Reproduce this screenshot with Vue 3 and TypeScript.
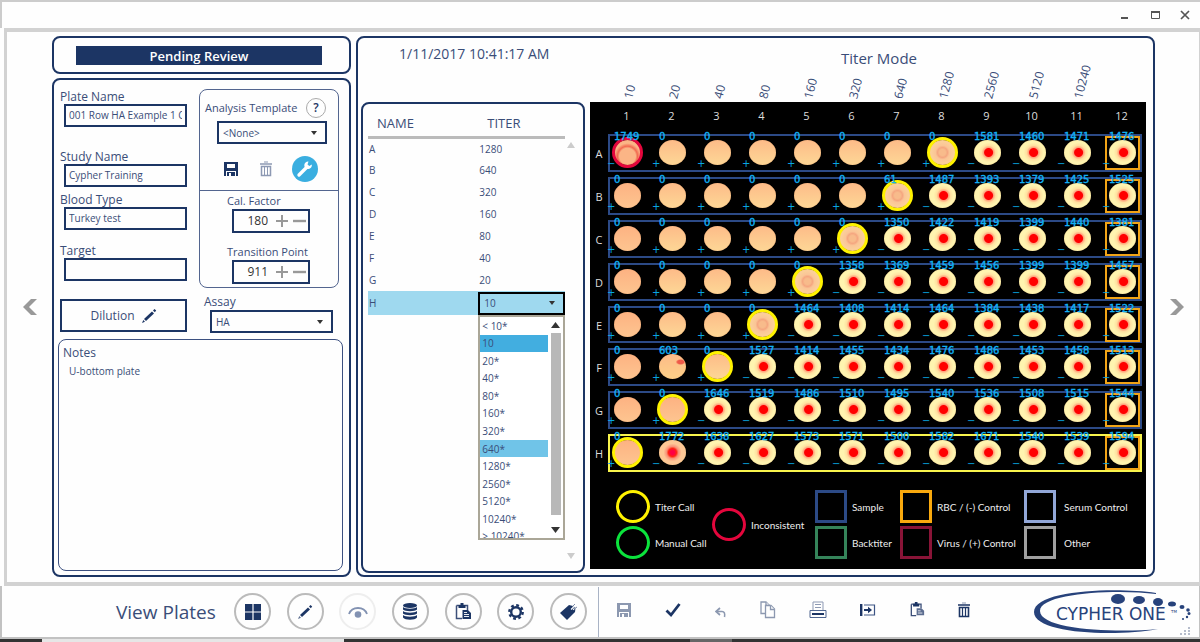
<script setup lang="ts">
import { ref } from 'vue'

interface PlateRow {
  name: string
  titer: string
  call: number
  values: number[]
}

const rows: PlateRow[] = [
  { name: 'A', titer: '1280', call: 8, values: [1749, 0, 0, 0, 0, 0, 0, 0, 1581, 1460, 1471, 1476] },
  { name: 'B', titer: '640', call: 7, values: [0, 0, 0, 0, 0, 0, 61, 1487, 1393, 1379, 1425, 1525] },
  { name: 'C', titer: '320', call: 6, values: [0, 0, 0, 0, 0, 0, 1350, 1422, 1419, 1399, 1440, 1381] },
  { name: 'D', titer: '160', call: 5, values: [0, 0, 0, 0, 0, 1358, 1369, 1459, 1456, 1399, 1399, 1457] },
  { name: 'E', titer: '80', call: 4, values: [0, 0, 0, 0, 1464, 1408, 1414, 1464, 1384, 1438, 1417, 1522] },
  { name: 'F', titer: '40', call: 3, values: [0, 603, 0, 1527, 1414, 1455, 1434, 1476, 1486, 1453, 1458, 1513] },
  { name: 'G', titer: '20', call: 2, values: [0, 0, 1646, 1519, 1486, 1510, 1495, 1540, 1536, 1508, 1515, 1544] },
  { name: 'H', titer: '10', call: 1, values: [0, 1772, 1638, 1627, 1573, 1571, 1500, 1582, 1671, 1540, 1539, 1594] },
]

const dilutions = ['10', '20', '40', '80', '160', '320', '640', '1280', '2560', '5120', '10240', '']
const titerOptions = ['< 10*', '10', '20*', '40*', '80*', '160*', '320*', '640*', '1280*', '2560*', '5120*', '10240*', '> 10240*']
const hovered = '640*'

const plateName = ref('001 Row HA Example 1 Copy')
const studyName = ref('Cypher Training')
const bloodType = ref('Turkey test')
const target = ref('')
const notes = ref('U-bottom plate')
const template = ref('<None>')
const assay = ref('HA')
const calFactor = ref(180)
const transition = ref(911)
const titerH = ref('10')

function isPositive(row: PlateRow, i: number): boolean {
  return i < row.call && !isInconsistent(row, i)
}

function isInconsistent(row: PlateRow, i: number): boolean {
  return row.name === 'A' && i === 0
}

function wellClass(row: PlateRow, i: number) {
  return {
    negative: i >= row.call,
    called: i === row.call - 1,
    inconsistent: isInconsistent(row, i),
    warm: i < row.call && (row.name === 'H' || row.name === 'G' || i === 0),
    smear: row.name === 'F' && i === 1,
    diffuse: row.name === 'H' && i === 1,
    ringed: i === row.call - 1 && row.call > 3,
  }
}
</script>

<template>
  <div class="window">
    <header class="titlebar">
      <button class="win-btn" aria-label="Minimize">
        <svg width="12" height="12" viewBox="0 0 12 12"><path d="M2 9H9" stroke="#555" stroke-width="2" /></svg>
      </button>
      <button class="win-btn" aria-label="Maximize">
        <svg width="12" height="12" viewBox="0 0 12 12"><path d="M2.500 3H10.500V9.500H2.500Z" fill="none" stroke="#555" /><path d="M2 3H11" stroke="#555" stroke-width="2" /></svg>
      </button>
      <button class="win-btn" aria-label="Close">
        <svg width="12" height="12" viewBox="0 0 12 12"><path d="M2 2L10 10M10 2L2 10" stroke="#555" stroke-width="1.700" /></svg>
      </button>
    </header>

    <main class="frame">
      <button class="pager" aria-label="Previous plate">
        <svg width="14" height="16" viewBox="0 0 14 16"><path d="M8 0H14L6 8L14 16H8L0 8Z" fill="#999" /></svg>
      </button>

      <section class="details">
        <div class="box status"><h1>Pending Review</h1></div>

        <div class="box form">
          <div class="form-cols">
            <div class="col-left">
              <div class="field first">
                <label for="plate">Plate Name</label>
                <input id="plate" v-model="plateName" type="text" />
              </div>
              <div class="field study">
                <label for="study">Study Name</label>
                <input id="study" v-model="studyName" type="text" />
              </div>
              <div class="field blood">
                <label for="blood">Blood Type</label>
                <input id="blood" v-model="bloodType" type="text" />
              </div>
              <div class="field">
                <label for="target">Target</label>
                <input id="target" v-model="target" type="text" />
              </div>
              <button class="dilution">
                Dilution
                <svg width="16" height="16" viewBox="0 0 16 16" fill="#1c3564"><path d="M3 11L11 3.500L13 5.500L5 13Z" /><path d="M12 2.500L13.500 1L15.200 2.600L13.800 4.300Z" /><path d="M2.300 12L4 13.700L1 15Z" /></svg>
              </button>
            </div>

            <div class="col-right">
              <div class="template-box">
                <div class="template-top">
                  <div class="template-label">
                    <label for="template">Analysis Template</label>
                    <button class="help" aria-label="Help">?</button>
                  </div>
                  <div class="select-wrap template-select">
                    <select id="template" v-model="template"><option>&lt;None&gt;</option></select>
                    <svg class="caret" width="6" height="4" viewBox="0 0 6 4"><path d="M0 0H6L3 4Z" fill="#333" /></svg>
                  </div>
                  <div class="template-actions">
                    <button aria-label="Save template">
                      <svg width="16" height="16" viewBox="0 0 16 16"><path d="M1 1H15V15H13V10H3V15H1ZM4 3V7H12V3ZM4 11H12V15H8V12H6V15H4Z" fill="#1c3564" fill-rule="evenodd" /></svg>
                    </button>
                    <button aria-label="Delete template">
                      <svg width="12" height="16" viewBox="0 0 12 16" fill="none" stroke="#8d99b3"><path d="M4 1H8" /><path d="M0 3H12M1.500 5.500V14.500H10.500V5.500Z" stroke-width="1.500" /><path d="M4.500 6V14M7.500 6V14" /></svg>
                    </button>
                    <button class="wrench" aria-label="Configure">
                      <svg width="18" height="18" viewBox="0 0 18 18"><path d="M3 15L11 7" stroke="#fff" stroke-width="3.400" stroke-linecap="round" /><path d="M15.800 4.500A3.800 3.800 0 1 1 12.500 1.500L11.500 4.500L13.300 6Z" fill="#fff" /></svg>
                    </button>
                  </div>
                </div>
                <div class="template-bottom">
                  <div class="field">
                    <label for="cal">Cal. Factor</label>
                    <div class="stepper">
                      <input id="cal" v-model.number="calFactor" type="text" />
                      <button aria-label="Increase calibration factor" @click="calFactor++"><svg width="12" height="12" viewBox="0 0 12 12"><path d="M6 0V12M0 6H12" stroke="#999" stroke-width="2" /></svg></button>
                      <button aria-label="Decrease calibration factor" @click="calFactor--"><svg width="13" height="12" viewBox="0 0 13 12"><path d="M0 6H13" stroke="#999" stroke-width="2.400" /></svg></button>
                    </div>
                  </div>
                  <div class="field">
                    <label for="trans">Transition Point</label>
                    <div class="stepper">
                      <input id="trans" v-model.number="transition" type="text" />
                      <button aria-label="Increase transition point" @click="transition++"><svg width="12" height="12" viewBox="0 0 12 12"><path d="M6 0V12M0 6H12" stroke="#999" stroke-width="2" /></svg></button>
                      <button aria-label="Decrease transition point" @click="transition--"><svg width="13" height="12" viewBox="0 0 13 12"><path d="M0 6H13" stroke="#999" stroke-width="2.400" /></svg></button>
                    </div>
                  </div>
                </div>
              </div>
              <div class="field assay">
                <label for="assay">Assay</label>
                <div class="select-wrap">
                  <select id="assay" v-model="assay"><option>HA</option></select>
                  <svg class="caret" width="6" height="4" viewBox="0 0 6 4"><path d="M0 0H6L3 4Z" fill="#333" /></svg>
                </div>
              </div>
            </div>
          </div>

          <div class="notes">
            <label for="notes">Notes</label>
            <textarea id="notes" v-model="notes"></textarea>
          </div>
        </div>
      </section>

      <section class="box plate">
        <div class="titer-col">
          <time class="stamp">1/11/2017 10:41:17 AM</time>
          <div class="box titer-box">
            <table>
              <thead>
                <tr><th>NAME</th><th>TITER</th></tr>
              </thead>
              <tbody>
                <tr v-for="row in rows" :key="row.name" :class="{ selected: row.name === 'H' }">
                  <td>{{ row.name }}</td>
                  <td v-if="row.name !== 'H'">{{ row.titer }}</td>
                  <td v-else>
                    <div class="titer-picker">
                      <div class="select-wrap">
                        <select v-model="titerH" aria-label="Titer for row H"><option>10</option></select>
                        <svg class="caret" width="6" height="4" viewBox="0 0 6 4"><path d="M0 0H6L3 4Z" fill="#333" /></svg>
                      </div>
                      <div class="menu">
                        <ul role="listbox" aria-label="Titer values">
                          <li v-for="o in titerOptions" :key="o" role="option" :aria-selected="o === titerH" :class="{ current: o === titerH, hover: o === hovered }">{{ o }}</li>
                        </ul>
                        <div class="scroll">
                          <svg width="9" height="6" viewBox="0 0 9 6"><path d="M0 6L4.500 0L9 6Z" fill="#333" /></svg>
                          <span class="thumb"></span>
                          <svg width="9" height="6" viewBox="0 0 9 6"><path d="M0 0L4.500 6L9 0Z" fill="#333" /></svg>
                        </div>
                      </div>
                    </div>
                  </td>
                </tr>
              </tbody>
            </table>
            <div class="gutter">
              <svg width="8" height="6" viewBox="0 0 8 6"><path d="M0 6L4 0L8 6Z" fill="#ccc" /></svg>
              <svg width="8" height="6" viewBox="0 0 8 6"><path d="M0 0L4 6L8 0Z" fill="#ccc" /></svg>
            </div>
          </div>
        </div>

        <div class="board-col">
          <h2>Titer Mode</h2>
          <div class="cols dilution-labels">
            <span v-for="(d, i) in dilutions" :key="i">{{ d }}</span>
          </div>
          <div class="board">
            <div class="cols numbers"><span v-for="n in 12" :key="n">{{ n }}</span></div>
            <div class="rows">
              <div v-for="row in rows" :key="row.name" class="row">
                <span class="row-name">{{ row.name }}</span>
                <div class="sample" :class="{ active: row.name === 'H' }">
                  <div class="wells">
                    <div v-for="(v, i) in row.values" :key="i" class="cell">
                      <i v-if="i === 11" class="control"></i>
                      <i class="well" :class="wellClass(row, i)"></i>
                      <i v-if="i === row.call - 1" class="ring"></i>
                      <i v-if="isInconsistent(row, i)" class="ring bad"></i>
                      <span class="value">{{ v }}</span>
                      <span class="sign">{{ isPositive(row, i) ? '+' : '−' }}</span>
                    </div>
                  </div>
                </div>
              </div>
            </div>
            <div class="legend">
              <div class="group">
                <div class="item"><i class="circle yellow"></i>Titer Call</div>
                <div class="item"><i class="circle green"></i>Manual Call</div>
              </div>
              <div class="group">
                <div class="item"><i class="circle red"></i>Inconsistent</div>
              </div>
              <div class="group">
                <div class="item"><i class="square blue"></i>Sample</div>
                <div class="item"><i class="square back"></i>Backtiter</div>
              </div>
              <div class="group">
                <div class="item"><i class="square orange"></i>RBC / (-) Control</div>
                <div class="item"><i class="square virus"></i>Virus / (+) Control</div>
              </div>
              <div class="group wide">
                <div class="item"><i class="square serum"></i>Serum Control</div>
                <div class="item"><i class="square other"></i>Other</div>
              </div>
            </div>
          </div>
        </div>
      </section>

      <button class="pager" aria-label="Next plate">
        <svg width="14" height="16" viewBox="0 0 14 16"><path d="M6 0H0L8 8L0 16H6L14 8Z" fill="#999" /></svg>
      </button>
    </main>

    <footer class="toolbar">
      <span class="view-title">View Plates</span>
      <nav class="round-buttons" aria-label="Views">
        <button aria-label="Plates">
          <svg width="16" height="16" viewBox="0 0 16 16" fill="#1c3564"><path d="M0 0H7.400V7.400H0ZM8.600 0H16V7.400H8.600ZM0 8.600H7.400V16H0ZM8.600 8.600H16V16H8.600Z" /></svg>
        </button>
        <button aria-label="Edit">
          <svg width="16" height="16" viewBox="0 0 16 16" fill="#1c3564"><path d="M3 11L11 3.500L13 5.500L5 13Z" /><path d="M12 2.500L13.500 1L15.200 2.600L13.800 4.300Z" /><path d="M2.300 12L4 13.700L1 15Z" opacity=".7" /></svg>
        </button>
        <button class="off" aria-label="Preview">
          <svg width="20" height="14" viewBox="0 0 20 14"><path d="M1 9C4 1 16 1 19 9" fill="none" stroke="#8292b2" stroke-width="1.800" /><circle cx="10" cy="9.500" r="3.300" fill="#8292b2" /></svg>
        </button>
        <button aria-label="Database">
          <svg width="14" height="17" viewBox="0 0 14 17" fill="#1c3564"><ellipse cx="7" cy="2.500" rx="7" ry="2.500" /><path d="M0 4C2 6.300 12 6.300 14 4V6.500C12 8.800 2 8.800 0 6.500ZM0 8C2 10.300 12 10.300 14 8V10.500C12 12.800 2 12.800 0 10.500ZM0 12C2 14.300 12 14.300 14 12V14.500C12 17.500 2 17.500 0 14.500Z" /></svg>
        </button>
        <button aria-label="Reports">
          <svg width="17" height="17" viewBox="0 0 17 17"><path d="M1.500 2.500H12.500V7M7 15.500H1.500V2.500" fill="none" stroke="#3c4f79" stroke-width="1.500" /><path d="M3.500 2H5.500V0H8.500V2H10.500V5H3.500ZM7.500 7H13L16 10V16H7.500Z" fill="#1c3564" /><path d="M9 9.500H12M9 11.500H14M9 13.500H14" stroke="#fff" stroke-width=".9" /></svg>
        </button>
        <button aria-label="Settings">
          <svg width="16" height="16" viewBox="0 0 16 16"><circle cx="8" cy="8" r="4.800" fill="none" stroke="#1c3564" stroke-width="2.400" /><circle cx="8" cy="8" r="6.700" fill="none" stroke="#1c3564" stroke-width="2.400" stroke-dasharray="2.800 2.462" /></svg>
        </button>
        <button aria-label="Tags">
          <svg width="17" height="16" viewBox="0 0 17 16"><path d="M0 9L9 1L13 2L15.500 3.500L15 8L7 16Z" fill="#1c3564" /><path d="M11 5.500L14 2.500L16 1M13 5.800L16.500 2.500" stroke="#fff" stroke-width="1.100" fill="none" /><path d="M12 3L15 0M14 5L17 3" stroke="#5b6d92" stroke-width=".8" /></svg>
        </button>
      </nav>
      <div class="flat-buttons">
        <button class="dim" aria-label="Save">
          <svg width="16" height="16" viewBox="0 0 16 16"><path d="M1 1H15V15H13V10H3V15H1ZM4 3V7H12V3ZM4 11H12V15H8V12H6V15H4Z" fill="#1c3564" fill-rule="evenodd" /></svg>
        </button>
        <button aria-label="Accept">
          <svg width="16" height="16" viewBox="0 0 16 16"><path d="M1.500 8.500L6 13L14.500 2" fill="none" stroke="#1c3564" stroke-width="2.800" /></svg>
        </button>
        <button class="dim" aria-label="Undo">
          <svg width="12" height="16" viewBox="0 0 12 16"><path d="M2 9.500H7Q10.500 9.500 9.500 15" fill="none" stroke="#1c3564" stroke-width="1.500" /><path d="M5 6L1 9.500L5 13" fill="none" stroke="#1c3564" stroke-width="1.700" /></svg>
        </button>
        <button class="dim" aria-label="Copy">
          <svg width="16" height="18" viewBox="0 0 16 18" fill="#fff" stroke="#1c3564" stroke-width="1.300"><path d="M1 1H6L9.500 4.500V12.500H1Z" /><path d="M6 1V4.500H9.500" /><path d="M5.500 4.500H11L14.500 8V16.500H5.500Z" /><path d="M10.500 4.500V8.500H14.500" /></svg>
        </button>
        <button aria-label="Print">
          <svg width="18" height="18" viewBox="0 0 18 18" fill="none"><path d="M4 9V1H14V9" stroke="#8d99b3" /><path d="M6 3.500H12M6 6.500H12" stroke="#8d99b3" /><path d="M1 9.500H17V16.500H1Z" stroke="#4e658f" /><path d="M3 13H15" stroke="#1c3564" stroke-width="2" /></svg>
        </button>
        <button aria-label="Export">
          <svg width="16" height="14" viewBox="0 0 16 14"><path d="M1.200 1V13" stroke="#1c3564" stroke-width="2.400" /><path d="M4 2H14.500V12H4" fill="none" stroke="#3c5484" stroke-width="1.200" /><path d="M4 7H9" stroke="#1c3564" stroke-width="2" /><path d="M8 3.800L12 7L8 10.200Z" fill="#1c3564" /></svg>
        </button>
        <button aria-label="Paste report">
          <svg width="15" height="15" viewBox="0 0 17 17"><path d="M1.500 2.500H12.500V7M7 15.500H1.500V2.500" fill="none" stroke="#3c4f79" stroke-width="1.500" /><path d="M3.500 2H5.500V0H8.500V2H10.500V5H3.500Z" fill="#1c3564" /><path d="M7.500 7H13L16 10V15H7.500Z" fill="#5c6d90" /><path d="M9 10H12M9 12.500H14" stroke="#fff" stroke-width=".9" /></svg>
        </button>
        <button aria-label="Delete">
          <svg width="12" height="16" viewBox="0 0 12 16" fill="none" stroke="#1c3564"><path d="M4 1H8" stroke="#8d99b3" /><path d="M0 3H12M1.500 5.500V14.500H10.500V5.500Z" stroke-width="1.600" /><path d="M4.500 6V14M7.500 6V14" stroke-width="1.200" /></svg>
        </button>
      </div>
      <svg class="logo" width="158" height="48" viewBox="0 0 158 48" role="img" aria-label="Cypher One">
        <path d="M122 5C82-1 0 2 0 24C0 46 82 49 124 41C84 45 6 42 6 23C6 5 82 1 122 6Z" fill="#27427b" />
        <g fill="#27427b">
          <ellipse cx="84" cy="11" rx="7" ry="5" /><ellipse cx="105" cy="12" rx="6" ry="4" /><ellipse cx="124" cy="14" rx="5" ry="4" />
          <ellipse cx="138" cy="16" rx="4" ry="2.500" /><ellipse cx="148" cy="19" rx="2.500" ry="2" /><circle cx="154" cy="22" r="1.800" /><circle cx="155" cy="25.500" r="1.500" /><circle cx="153" cy="29" r="1.200" /><circle cx="149" cy="31" r="1" />
        </g>
        <text x="22" y="32" font-family="'DejaVu Sans', sans-serif" font-size="17" fill="#27427b">CYPHER ONE</text>
        <text x="137" y="25" font-family="'DejaVu Sans', sans-serif" font-size="4" fill="#27427b">TM</text>
        <g fill="#b5bccb"><path d="M154 39h2v2h-2zM150 42h2v2h-2zM154 42h2v2h-2zM146 45h2v2h-2zM150 45h2v2h-2zM154 45h2v2h-2z" /></g>
      </svg>
    </footer>
    <div class="desktop-edge"><span class="dark start"></span><span class="light"></span><span class="dark"></span><span class="mid"></span><span class="dark end"></span></div>
  </div>
</template>

<style>
body { margin: 0; background: #fff; }
</style>

<style scoped>
.window {
  --navy: #1c3564;
  --ink: #3a4d78;
  box-sizing: border-box;
  min-height: 100vh;
  display: flex;
  flex-direction: column;
  border-top: 2px solid #ccc;
  background: #fefefe;
  color: var(--ink);
  font-family: "Open Sans", "Noto Sans", sans-serif;
  font-size: 12px;
  line-height: 16px;
}
.window *, .window *::before { box-sizing: border-box; }
button { border: 0; padding: 0; background: none; color: inherit; font: inherit; cursor: pointer; display: flex; align-items: center; justify-content: center; }
input, select, textarea { font: inherit; color: inherit; border: 0; margin: 0; background: transparent; border-radius: 0; outline: none; min-width: 0; }
svg { display: block; flex: none; }
h1, h2 { margin: 0; font-weight: 400; }
i { font-style: normal; }
.box { border: 2px solid var(--navy); border-radius: 8px; }

.titlebar { height: 26px; display: flex; justify-content: flex-end; align-items: center; gap: 18px; padding-right: 9px; border-left: 2px solid #ccc; }
.frame { flex: 1; display: grid; grid-template-columns: 45px minmax(0, 304fr) minmax(0, 799fr) 44px; border: solid #d2d2d2; border-width: 4px 1px 4px 3px; margin-left: 4px; padding: 4px 0 5px; }

.details { display: flex; flex-direction: column; gap: 4px; margin-right: 5px; }
.status { height: 38px; padding: 8px 27px 0 22px; }
.status h1 { background: var(--navy); color: #fff; height: 19px; line-height: 20px; font-size: 13px; font-weight: 600; text-align: center; }
.form { flex: 1; display: flex; flex-direction: column; gap: 6px; padding: 9px 6px 4px 4px; }
.form-cols { display: grid; grid-template-columns: minmax(0, 129fr) minmax(0, 12fr) minmax(0, 140fr); padding-right: 4px; }
.col-left { display: flex; flex-direction: column; padding-left: 2px; }
.col-right { grid-column: 3; display: flex; flex-direction: column; }
.field { display: flex; flex-direction: column; }
.col-left .field { margin-bottom: 13px; }
.col-left .field.study { margin-bottom: 5px; }
.col-left .field.first { margin-bottom: 22px; }
.col-left input { margin-left: 4px; height: 23px; border: 2px solid var(--navy); padding: 0 3px 2px; font-size: 10px; }
.col-left .field label { height: 15px; }
.dilution { height: 33px; border: 2px solid var(--navy); gap: 6px; margin-top: 5px; }
.template-box { border: 1px solid #53658f; border-radius: 8px; height: 199px; }
.template-top { height: 101px; border-bottom: 1px solid #53658f; padding-top: 8px; }
.template-label { display: flex; align-items: center; justify-content: space-between; padding: 0 12px 0 5px; font-size: 11px; height: 20px; }
.help { width: 20px; height: 20px; border: 1px solid #aaa; border-radius: 50%; font-size: 12px; font-weight: 600; color: var(--navy); }
.select-wrap { display: grid; border: 2px solid var(--navy); height: 23px; align-items: center; }
.select-wrap > * { grid-area: 1 / 1; }
.select-wrap select { appearance: none; width: 100%; height: 19px; padding: 0 4px; font-size: 10px; }
.caret { justify-self: end; margin-right: 8px; pointer-events: none; }
.template-select { margin: 3px 11px 0 17px; }
.template-actions { display: flex; align-items: center; justify-content: space-between; padding: 0 20px 0 23px; height: 26px; margin-top: 12px; }
.wrench { width: 26px; height: 26px; border-radius: 50%; background: #3aaee0; }
.template-bottom { padding: 2px 27px 0; }
.template-bottom .field { margin-bottom: 11px; }
.template-bottom label { white-space: nowrap; font-size: 11px; }
.stepper { display: flex; align-items: center; gap: 5px; margin-left: 5px; margin-right: 1px; height: 24px; border: 2px solid var(--navy); padding-right: 2px; }
.stepper input { flex: 1; width: 20px; text-align: right; padding: 0 3px 0 0; font-size: 12px; color: #333; }
.assay { padding: 6px 6px 0 5px; }
.assay .select-wrap { margin-left: 6px; }
.notes { flex: 1; border: 1px solid #3c5080; border-radius: 8px; display: flex; flex-direction: column; padding: 5px 4px; }
.notes textarea { flex: 1; resize: none; padding: 3px 6px; font-size: 10px; line-height: 14px; }

.plate { display: grid; grid-template-columns: minmax(0, 224fr) minmax(0, 556fr); gap: 5px; padding: 0 7px 2px 3px; }
.titer-col, .board-col { display: flex; flex-direction: column; min-width: 0; }
.stamp { height: 64px; padding: 6px 0 0 38px; font-size: 14px; line-height: 20px; white-space: nowrap; }
.titer-box { flex: 1; display: flex; padding-left: 5px; font-size: 10px; }
table { flex: 1; align-self: flex-start; border-collapse: collapse; table-layout: fixed; width: 100%; }
th { font-weight: 400; font-size: 13px; text-align: left; height: 33px; padding: 6px 0 0 9px; border-bottom: 3px solid #bbb; }
th:first-child { width: 56%; }
td { height: 22px; padding: 0 0 0 1px; line-height: 16px; }
tr.selected td { background: #9fd9ef; height: 24px; }
.titer-picker { position: relative; margin-left: -1px; }
.titer-picker .select-wrap { border-color: #000; }
.menu { position: absolute; top: 23px; left: 0; right: 0; height: 225px; border: 2px solid #aaa697; background: #fff; display: flex; overflow: hidden; z-index: 2; }
.menu ul { flex: 1; height: 229px; margin: 0; padding: 1px 0 0; list-style: none; display: grid; grid-auto-rows: 1fr; }
.menu li { display: flex; align-items: center; padding-left: 2px; line-height: 16px; margin-bottom: 1px; }
.current { background: #42aee0; }
.hover { background: #70c4e8; }
.scroll { width: 15px; display: flex; flex-direction: column; align-items: center; padding: 5px 2px; gap: 5px; }
.thumb { width: 10px; flex: 1; background: #b8b8b8; margin-bottom: 7px; }
.gutter { width: 18px; display: flex; flex-direction: column; align-items: center; justify-content: space-between; padding: 38px 6px 12px 0; flex: none; }

.board-col h2 { font-size: 15px; line-height: 20px; padding: 10px 0 0 22px; text-align: center; height: 30px; }
.cols { display: grid; grid-template-columns: repeat(12, minmax(0, 1fr)); padding: 0 1px 0 15px; }
.dilution-labels { height: 34px; align-items: end; font-size: 12px; line-height: 12px; }
.dilution-labels span { justify-self: start; transform: rotate(-75deg); transform-origin: 0 100%; margin: 0 0 2px 29px; width: 0; white-space: nowrap; }
.board { flex: 1; background: #000; color: #ddd; display: flex; flex-direction: column; margin-bottom: 4px; }
.numbers { height: 32px; line-height: 28px; font-size: 11px; text-align: center; }
.numbers span { padding-right: 2px; }
.rows { height: 338px; display: grid; grid-template-rows: repeat(8, minmax(0, 1fr)); gap: 5px; padding-right: 4px; }
.row { display: grid; grid-template-columns: 18px minmax(0, 1fr); }
.row-name { text-align: center; padding-top: 12px; font-size: 11px; }
.sample { border: 2px solid #2c4a86; min-height: 0; }
.sample.active { border-color: #f8f44c; }
.wells { display: grid; grid-template-columns: repeat(12, minmax(0, 1fr)); margin: 0 -5px; }
.cell { display: grid; justify-items: center; }
.cell > * { grid-area: 1 / 1; }
.well { width: 27px; height: 25px; margin-top: 4px; border-radius: 50%; background: linear-gradient(#fdbb88, #fdd796); box-shadow: inset 0 0 1px #e9a26b; }
.well.warm { background: linear-gradient(#fdb282, #fdc590); }
.well.ringed { background: radial-gradient(circle, #f8bb8b 0 3px, #f5a780 5px, #fac596 7px, #fbcf9a 11px); }
.well.negative { background: radial-gradient(circle at 54% 50%, #f00 0 4px, #ffa27c 5px, #ffe0a0 7px, #fff4b0 10px); box-shadow: inset 0 0 1px #f3cc86; }
.well.diffuse { background: radial-gradient(circle, #f04 0 2px, #f21 4px, #f99278 6px, #fdc796 9px); }
.well.smear { background: radial-gradient(ellipse 5px 3px at 80% 32%, #ee5948 0 60%, transparent 100%), linear-gradient(#fdbb88, #fdd088); }
.well.inconsistent { background: radial-gradient(circle at 50% 65%, #fbb586 0 8px, #f26a50 10px, #fbb586 13px); }
.ring { width: 31px; height: 31px; margin-top: 1px; border: 3px solid #fff200; border-radius: 50%; }
.ring.bad { border-color: #e4063c; }
.control { width: 35px; height: 34px; border: 2px solid #f2a416; }
.value { justify-self: start; margin: -5px 0 0 9px; font: 10px/12px "DejaVu Sans", sans-serif; height: 12px; color: #12b0f4; -webkit-text-stroke: 0.4px #12b0f4; }
.sign { justify-self: start; margin: 22px 0 0 2px; font: 10px/12px "DejaVu Sans", sans-serif; height: 12px; color: #08a5e0; }
.legend { display: grid; grid-template-columns: 96fr 103fr 85fr 124fr 122fr; padding: 18px 0 0 26px; color: #eee; font: 11px/16px "Open Sans", sans-serif; font-family: Lato, sans-serif; font-size: 10px; }
.group { display: flex; flex-direction: column; justify-content: center; gap: 3px; }
.item { display: flex; align-items: center; gap: 5px; white-space: nowrap; }
.wide .item { gap: 8px; }
.circle { width: 34px; height: 33px; border-radius: 50%; border: 3px solid; }
.square { width: 32px; height: 33px; border: 3px solid; }
.yellow { border-color: #fff200; }
.green { border-color: #0be33c; }
.red { border-color: #e4063c; }
.blue { border-color: #2c4a86; }
.back { border-color: #35845a; }
.orange { border-color: #f9a90e; }
.virus { border-color: #891437; }
.serum { border-color: #92a7d8; }
.other { border-color: #a0a0a0; }

.toolbar { height: 53px; display: flex; align-items: center; border: solid #c2c2c2; border-width: 0 1px 2px 2px; padding: 0 7px 0 114px; }
.view-title { font-size: 19px; line-height: 26px; width: 118px; white-space: nowrap; }
.round-buttons { width: 353px; display: flex; justify-content: space-between; }
.round-buttons button { width: 37px; height: 37px; border: 2px solid #bbb; border-radius: 50%; }
.round-buttons .off { border-color: #eee; }
.flat-buttons { align-self: stretch; margin: 1px 0 0 11px; padding: 0 0 5px 17px; border-left: 1px solid #a9b3c5; width: 372px; display: flex; align-items: center; justify-content: space-between; }
.dim { opacity: .5; }
.logo { margin-left: auto; }
.desktop-edge { height: 3px; display: flex; }
.dark { background: #333; flex: 346; }
.dark.start { flex: 42; }
.dark.end { flex: 468; }
.light { background: #e6e6e6; flex: 302; }
.mid { background: #666; flex: 42; }
</style>
